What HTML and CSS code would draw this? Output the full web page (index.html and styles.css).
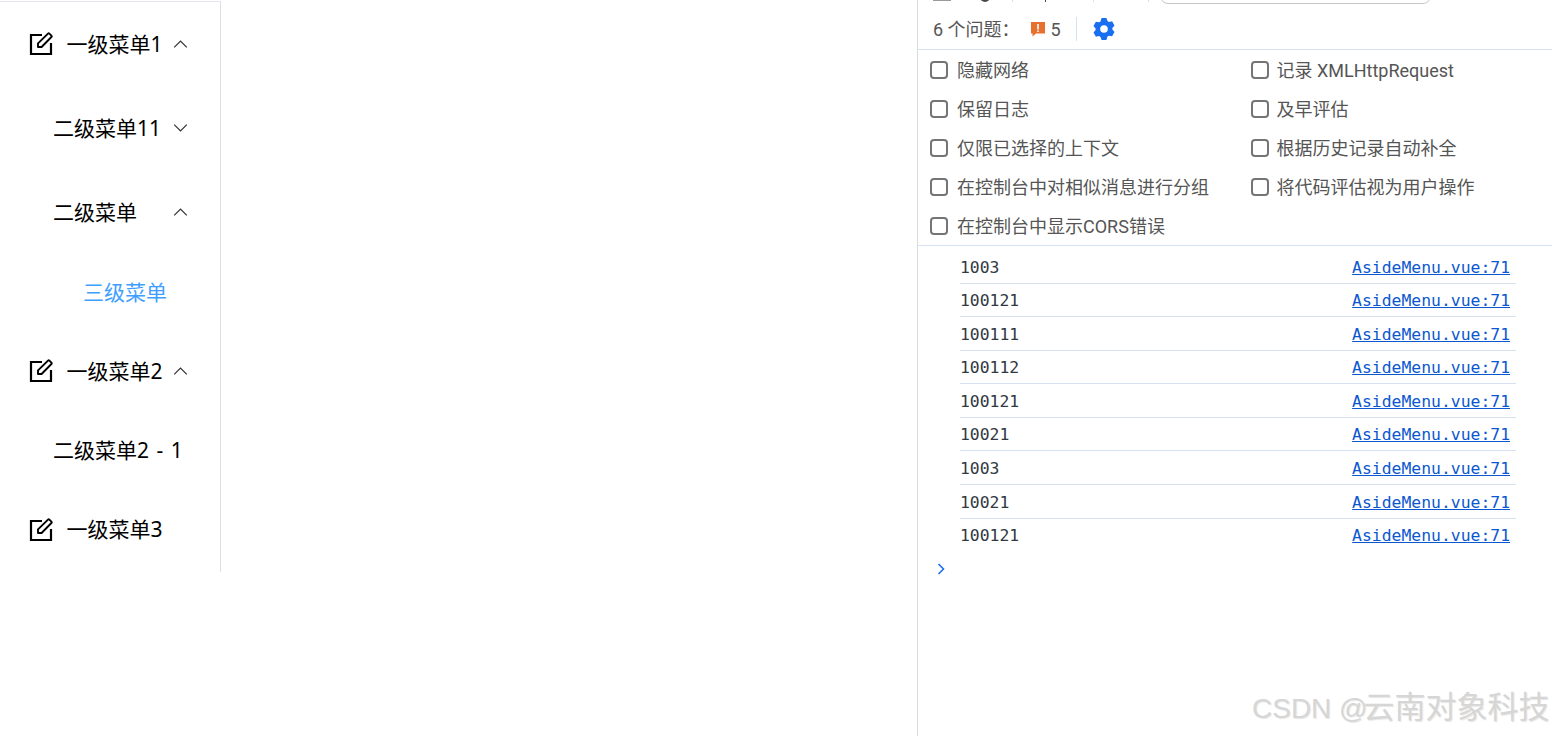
FILE: index.html
```html
<!DOCTYPE html>
<html lang="zh-CN">
<head>
<meta charset="utf-8">
<title>Menu</title>
<link rel="stylesheet" href="styles.css">
</head>
<body>
<svg class="defs" width="0" height="0" aria-hidden="true">
  <symbol id="edit" viewBox="0 0 24 24"><path d="M22 11v11H2V3h11" fill="none" stroke="currentColor" stroke-width="2.200"/><path d="M9 15v-3.600L19 1.600a1 1 0 0 1 1.400 0l2 2a1 1 0 0 1 0 1.400L12.600 15z" fill="none" stroke="currentColor" stroke-width="1.900" stroke-linejoin="round"/></symbol>
  <symbol id="up" viewBox="0 0 14 8"><path d="M.7 7.300 7 1l6.300 6.300" fill="none" stroke="currentColor" stroke-width="1.200"/></symbol>
  <symbol id="down" viewBox="0 0 14 8"><path d="M.7.700 7 7l6.300-6.300" fill="none" stroke="currentColor" stroke-width="1.200"/></symbol>
</svg>
<div class="page">
  <nav class="menu">
    <div class="row row-tall lvl1"><svg class="edit"><use href="#edit"/></svg><span class="label">一级菜单1</span><svg class="arrow"><use href="#up"/></svg></div>
    <div class="row row-tall lvl2"><span class="label">二级菜单11</span><svg class="arrow"><use href="#down"/></svg></div>
    <div class="row row-tall lvl2"><span class="label">二级菜单</span><svg class="arrow"><use href="#up"/></svg></div>
    <div class="row lvl3"><span class="label active">三级菜单</span></div>
    <div class="row lvl1"><svg class="edit"><use href="#edit"/></svg><span class="label">一级菜单2</span><svg class="arrow"><use href="#up"/></svg></div>
    <div class="row lvl2"><span class="label">二级菜单2 - 1</span></div>
    <div class="row lvl1"><svg class="edit"><use href="#edit"/></svg><span class="label">一级菜单3</span></div>
  </nav>
  <main class="blank"></main>
  <section class="devtools">
    <div class="clipped-bar">
      <span class="stub stub-a"></span><span class="stub stub-b"></span><span class="stub stub-c"></span><span class="sep sep-1"></span><span class="sep sep-2"></span><span class="sep sep-3"></span><span class="filter-box"></span>
    </div>
    <div class="issues">
      <span>6 个问题：</span>
      <span class="issue-count">
        <svg class="flag" viewBox="0 0 16 16"><path d="M1 1h14v11.500H6l-3.500 3v-3H1z" fill="#e8702f"/><path d="M7.200 3h1.600v5.500H7.200zM7.200 9.500h1.600v1.500H7.200z" fill="#fff"/></svg>
        5
      </span>
      <span class="divider"></span>
      <svg class="gear" viewBox="0 0 24 24"><path fill-rule="evenodd" fill="#1a6ff0" d="M9.600 1h4.800l1.100 3.100 1.400.8 3.200-.6 2.400 4.200-2.100 2.500v1.600l2.100 2.500-2.400 4.200-3.200-.6-1.400.8L14.400 23H9.600l-1.100-3.100-1.400-.8-3.200.6-2.400-4.200 2.100-2.500v-1.600L1.500 8.900l2.400-4.200 3.200.6 1.400-.8zM12 8.200a3.800 3.800 0 1 0 0 7.600 3.800 3.800 0 0 0 0-7.600z"/></svg>
    </div>
    <div class="options">
      <label class="opt"><span class="box"></span>隐藏网络</label>
      <label class="opt"><span class="box"></span>记录 XMLHttpRequest</label>
      <label class="opt"><span class="box"></span>保留日志</label>
      <label class="opt"><span class="box"></span>及早评估</label>
      <label class="opt"><span class="box"></span>仅限已选择的上下文</label>
      <label class="opt"><span class="box"></span>根据历史记录自动补全</label>
      <label class="opt"><span class="box"></span>在控制台中对相似消息进行分组</label>
      <label class="opt"><span class="box"></span>将代码评估视为用户操作</label>
      <label class="opt"><span class="box"></span>在控制台中显示CORS错误</label>
    </div>
    <div class="log">
      <div class="line"><span>1003</span><a class="src">AsideMenu.vue:71</a></div>
      <div class="line"><span>100121</span><a class="src">AsideMenu.vue:71</a></div>
      <div class="line"><span>100111</span><a class="src">AsideMenu.vue:71</a></div>
      <div class="line"><span>100112</span><a class="src">AsideMenu.vue:71</a></div>
      <div class="line"><span>100121</span><a class="src">AsideMenu.vue:71</a></div>
      <div class="line"><span>10021</span><a class="src">AsideMenu.vue:71</a></div>
      <div class="line"><span>1003</span><a class="src">AsideMenu.vue:71</a></div>
      <div class="line"><span>10021</span><a class="src">AsideMenu.vue:71</a></div>
      <div class="line"><span>100121</span><a class="src">AsideMenu.vue:71</a></div>
    </div>
    <svg class="prompt" viewBox="0 0 8 12"><path d="M1.500 1 6.500 6l-5 5" fill="none" stroke="#1a6ff0" stroke-width="1.600"/></svg>
  </section>
</div>
<div class="watermark">CSDN @<span class="wm-cn">云南对象科技</span></div>
</body>
</html>
```

FILE: styles.css
```css
* { box-sizing: border-box; }
html, body { margin: 0; height: 100%; overflow: hidden; background: #fff; }
body { font-family: "Noto Sans", "Noto Sans CJK SC", sans-serif; position: relative; }
.defs { display: block; height: 0; }
.page { display: flex; height: 736px; }

.menu {
  width: 221px;
  height: 571px;
  margin-top: 1px;
  padding-top: 1px;
  border-top: 1px solid #e4e7ed;
  border-right: 1px solid #dcdfe6;
  flex: none;
  color: #000;
  font: 21px/1 "Noto Sans", "Noto Sans CJK SC", sans-serif;
  word-spacing: 2px;
}
.row { display: flex; align-items: center; height: 79.4px; position: relative; }
.row-tall { height: 84px; }
.lvl1 { padding-left: 29px; }
.lvl2 { padding-left: 53px; }
.lvl3 { padding-left: 83px; height: 77.4px; }
.label { padding-bottom: 2px; }
.edit { width: 24px; height: 24px; margin-right: 13.5px; margin-bottom: 2px; flex: none; }
.active { color: #409eff; }
.arrow { position: absolute; left: 173px; top: 50%; margin-top: -5px; width: 15px; height: 8px; color: #303133; }

.blank { flex: 1; }

.devtools {
  width: 635px;
  flex: none;
  border-left: 1px solid #dadce0;
  color: #555;
  position: relative;
  font: 18px/1 Roboto, "Noto Sans CJK SC", sans-serif;
}
.clipped-bar { height: 10px; position: relative; overflow: hidden; }
.stub { position: absolute; height: 10px; }
.stub-a { left: 15px; width: 18px; top: -9px; background: #9a9a9a; }
.stub-b { left: 62px; width: 10px; border-radius: 5px; background: #474747; top: -8px; }
.stub-c { left: 127px; width: 1px; top: -8px; background: #474747; }
.sep { position: absolute; top: 0; width: 1px; height: 2px; background: #d6e2f2; }
.sep-1 { left: 94px; }
.sep-2 { left: 175px; }
.sep-3 { left: 230px; }
.filter-box { position: absolute; left: 242px; top: -20px; width: 271px; height: 24px; border: 1px solid #c4c7c5; border-radius: 8px; }

.issues {
  height: 40px;
  display: flex;
  align-items: center;
  padding-left: 15px;
  border-bottom: 1px solid #d6e2f2;
}
.issue-count { display: flex; align-items: center; gap: 5px; margin-left: 10px; }
.flag { width: 16px; height: 16px; margin-top: -2px; }
.divider { width: 1px; height: 24px; background: #d6e2f2; margin: -2px 15px 0; }
.gear { width: 24px; height: 24px; margin-top: -2px; }

.options {
  display: grid;
  grid-template-columns: 320.5px 1fr;
  grid-auto-rows: 39px;
  height: 196px;
  padding: 1px 0 0 12px;
  border-bottom: 1px solid #d6e2f2;
}
.opt { display: flex; align-items: center; gap: 9px; white-space: nowrap; }
.opt:nth-child(even) { gap: 8px; }
.box { width: 18px; height: 18px; margin-top: -2px; border: 2px solid #757575; border-radius: 4px; flex: none; }

.log {
  margin: 4.2px 36px 0 42px;
  font: 16.4px/1 "DejaVu Sans Mono", monospace;
  color: #303942;
}
.line {
  display: flex;
  justify-content: space-between;
  align-items: center;
  height: 33.56px;
  padding: 3px 6px 0 0;
  border-bottom: 1px solid #d6e2f2;
}
.line:last-child { border-bottom: 0; padding-top: 2px; }
.src { color: #0b57d0; text-decoration: underline; }
.prompt { display: block; width: 8px; height: 12px; margin: 11px 0 0 19px; }

.watermark {
  position: absolute;
  left: 1252px;
  top: 688px;
  font: 28px/1.3 "Liberation Sans", "Noto Sans CJK SC", sans-serif;
  color: #d6d6d6;
  text-shadow: 1px 1px 1px #e6e6e6;
  white-space: nowrap;
}
.wm-cn { font-size: 31px; margin-left: -4px; }
```
